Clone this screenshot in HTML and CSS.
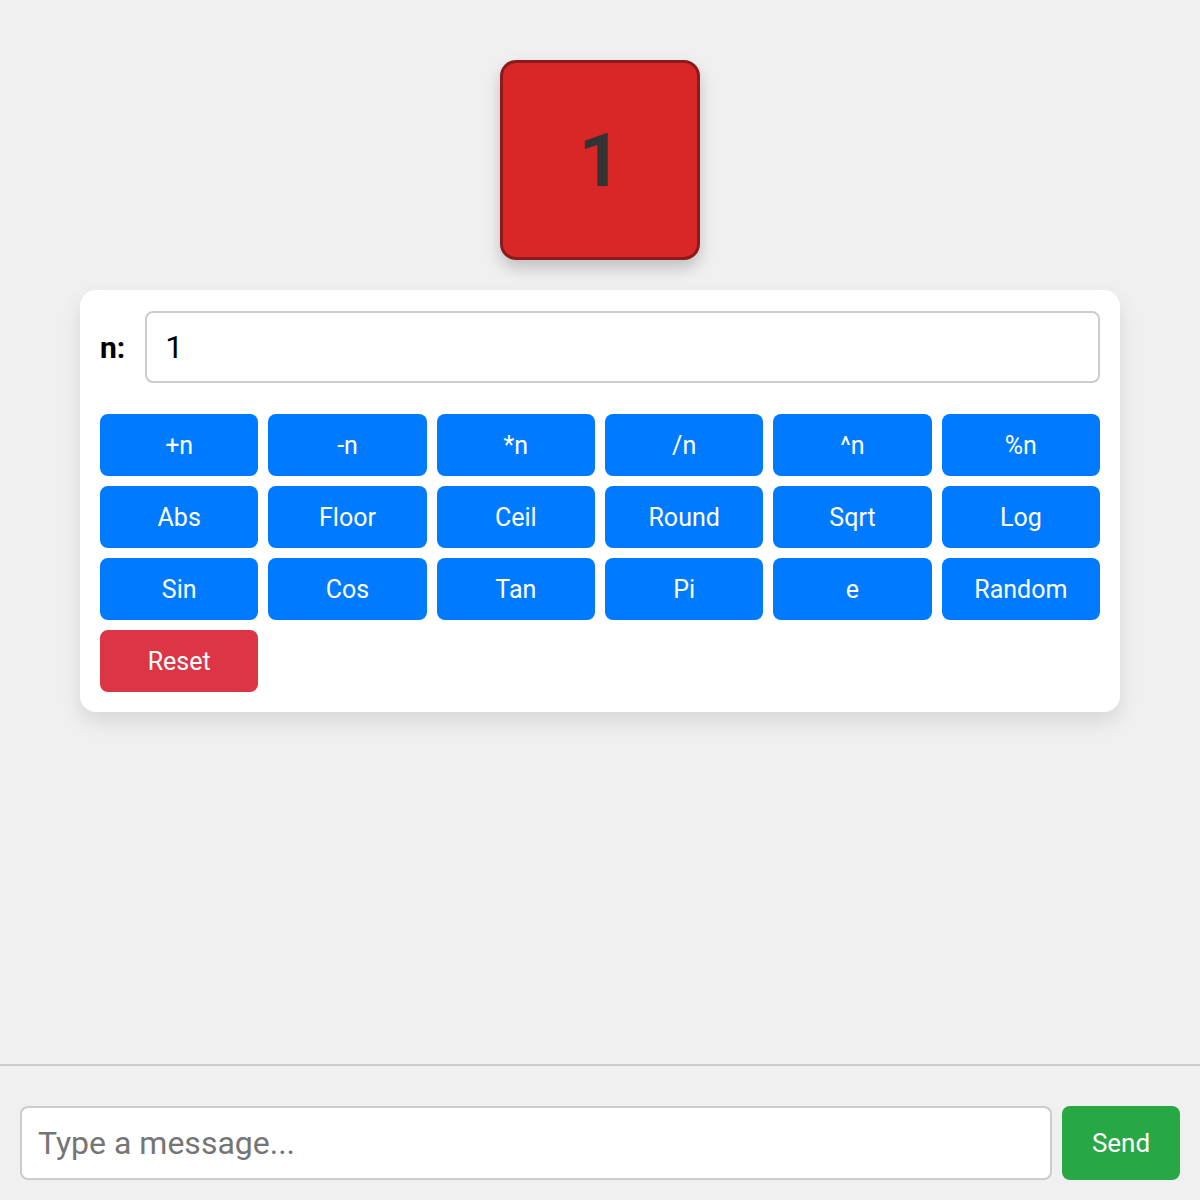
FILE: index.html
```html
<!DOCTYPE html>
<html>
<head>
<meta charset="utf-8">
<link rel="stylesheet" href="styles.css">
</head>
<body>
<div class="app">
  <main class="main">
    <div class="tile">1</div>
    <div class="card">
      <div class="row">
        <label class="label">n:</label>
        <input class="num" type="text" value="1">
      </div>
      <div class="grid">
        <button class="btn">+n</button>
        <button class="btn">-n</button>
        <button class="btn">*n</button>
        <button class="btn">/n</button>
        <button class="btn">^n</button>
        <button class="btn">%n</button>
        <button class="btn">Abs</button>
        <button class="btn">Floor</button>
        <button class="btn">Ceil</button>
        <button class="btn">Round</button>
        <button class="btn">Sqrt</button>
        <button class="btn">Log</button>
        <button class="btn">Sin</button>
        <button class="btn">Cos</button>
        <button class="btn">Tan</button>
        <button class="btn">Pi</button>
        <button class="btn">e</button>
        <button class="btn">Random</button>
        <button class="btn btn-red">Reset</button>
      </div>
    </div>
  </main>
  <footer class="footer">
    <input class="msg" type="text" placeholder="Type a message...">
    <button class="send">Send</button>
  </footer>
</div>
</body>
</html>
```
FILE: styles.css
```css
* { box-sizing: border-box; }
html, body {
  margin: 0;
  padding: 0;
  background: #f0f0f0;
  font-family: Roboto, "Liberation Sans", sans-serif;
}
.app {
  height: 100vh;
  display: flex;
  flex-direction: column;
}
.main {
  flex: 1;
  display: flex;
  flex-direction: column;
  align-items: center;
  padding-top: 60px;
}
.tile {
  width: 200px;
  height: 200px;
  background: #d92626;
  border: 3px solid #8b1a1a;
  border-radius: 16px;
  box-shadow: 0 8px 16px rgba(0,0,0,0.2);
  display: flex;
  align-items: center;
  justify-content: center;
  font-size: 74px;
  font-weight: bold;
  color: #333;
}
.card {
  margin-top: 30px;
  width: 1040px;
  background: #fff;
  border-radius: 16px;
  box-shadow: 0 10px 20px rgba(0,0,0,0.1);
  padding: 20px;
}
.row {
  display: flex;
  align-items: center;
  gap: 20px;
  margin-top: 1px;
}
.label {
  font-size: 30px;
  font-weight: bold;
  color: #000;
}
.num {
  flex: 1;
  height: 72px;
  border: 2px solid #ccc;
  border-radius: 8px;
  padding: 0 18px;
  font-size: 32px;
  font-family: Roboto, "Liberation Sans", sans-serif;
  color: #000;
}
.grid {
  margin-top: 31px;
  display: grid;
  grid-template-columns: repeat(6, 1fr);
  gap: 10px;
}
.btn {
  height: 62px;
  border: none;
  border-radius: 8px;
  background: #007bff;
  color: #fff;
  font-size: 25px;
  font-family: Roboto, "Liberation Sans", sans-serif;
}
.btn-red { background: #dc3545; }
.footer {
  border-top: 2px solid #ccc;
  padding: 40px 20px 20px;
  display: flex;
  gap: 10px;
}
.msg {
  flex: 1;
  height: 74px;
  border: 2px solid #ccc;
  border-radius: 8px;
  padding: 0 16px;
  font-size: 32px;
  font-family: Roboto, "Liberation Sans", sans-serif;
}
.msg::placeholder { color: #757575; }
.send {
  width: 118px;
  height: 74px;
  border: none;
  border-radius: 8px;
  background: #28a745;
  color: #fff;
  font-size: 26px;
  font-family: Roboto, "Liberation Sans", sans-serif;
}
```
